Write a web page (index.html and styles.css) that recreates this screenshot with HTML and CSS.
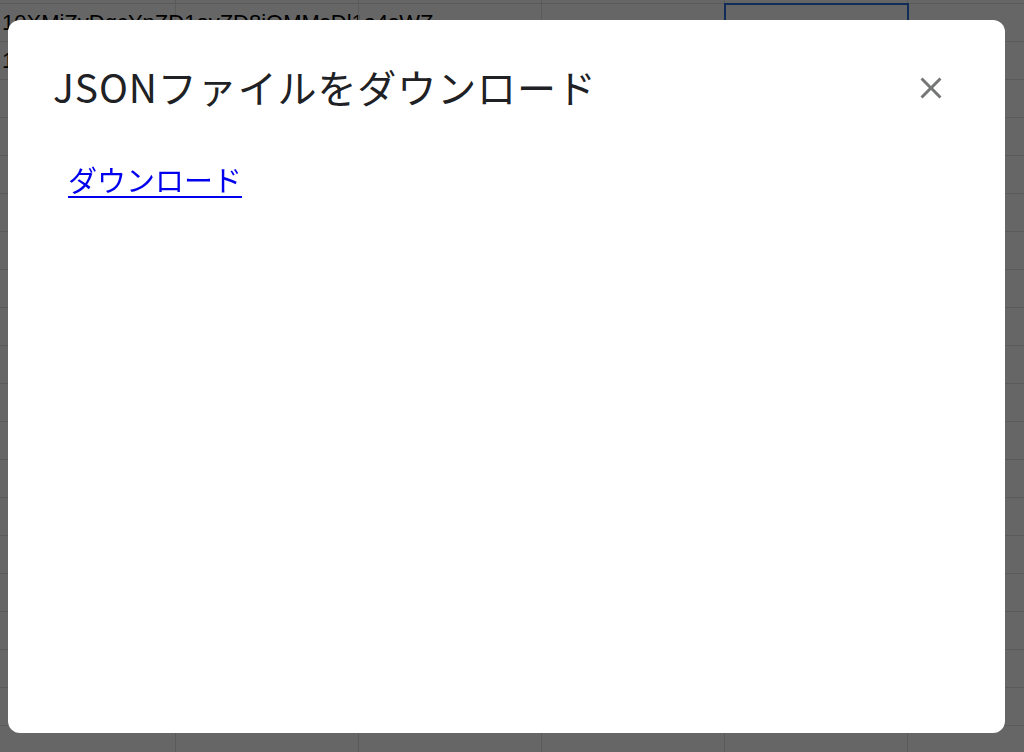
FILE: index.html
```html
<!DOCTYPE html>
<html lang="ja">
<head>
<meta charset="utf-8">
<title>JSONファイルをダウンロード</title>
<link rel="stylesheet" href="styles.css">
</head>
<body>
<div class="sheet">
  <div class="row row-top">
    <div class="cell c-first"></div><div class="cell"></div><div class="cell"></div><div class="cell"></div><div class="cell"></div><div class="cell"></div>
  </div>
  <div class="row">
    <div class="cell c-first"><span class="cell-text">10XMiZyDqcYnZD1ovZD8iOMMsDl1a4sWZ</span></div><div class="cell"></div><div class="cell"></div><div class="cell"></div><div class="cell selected"></div><div class="cell"></div>
  </div>
  <div class="row">
    <div class="cell c-first"><span class="cell-text">1fXqZ</span></div><div class="cell"></div><div class="cell"></div><div class="cell"></div><div class="cell"></div><div class="cell"></div>
  </div>
  <div class="row"><div class="cell c-first"></div><div class="cell"></div><div class="cell"></div><div class="cell"></div><div class="cell"></div><div class="cell"></div></div>
  <div class="row"><div class="cell c-first"></div><div class="cell"></div><div class="cell"></div><div class="cell"></div><div class="cell"></div><div class="cell"></div></div>
  <div class="row"><div class="cell c-first"></div><div class="cell"></div><div class="cell"></div><div class="cell"></div><div class="cell"></div><div class="cell"></div></div>
  <div class="row"><div class="cell c-first"></div><div class="cell"></div><div class="cell"></div><div class="cell"></div><div class="cell"></div><div class="cell"></div></div>
  <div class="row"><div class="cell c-first"></div><div class="cell"></div><div class="cell"></div><div class="cell"></div><div class="cell"></div><div class="cell"></div></div>
  <div class="row"><div class="cell c-first"></div><div class="cell"></div><div class="cell"></div><div class="cell"></div><div class="cell"></div><div class="cell"></div></div>
  <div class="row"><div class="cell c-first"></div><div class="cell"></div><div class="cell"></div><div class="cell"></div><div class="cell"></div><div class="cell"></div></div>
  <div class="row"><div class="cell c-first"></div><div class="cell"></div><div class="cell"></div><div class="cell"></div><div class="cell"></div><div class="cell"></div></div>
  <div class="row"><div class="cell c-first"></div><div class="cell"></div><div class="cell"></div><div class="cell"></div><div class="cell"></div><div class="cell"></div></div>
  <div class="row"><div class="cell c-first"></div><div class="cell"></div><div class="cell"></div><div class="cell"></div><div class="cell"></div><div class="cell"></div></div>
  <div class="row"><div class="cell c-first"></div><div class="cell"></div><div class="cell"></div><div class="cell"></div><div class="cell"></div><div class="cell"></div></div>
  <div class="row"><div class="cell c-first"></div><div class="cell"></div><div class="cell"></div><div class="cell"></div><div class="cell"></div><div class="cell"></div></div>
  <div class="row"><div class="cell c-first"></div><div class="cell"></div><div class="cell"></div><div class="cell"></div><div class="cell"></div><div class="cell"></div></div>
  <div class="row"><div class="cell c-first"></div><div class="cell"></div><div class="cell"></div><div class="cell"></div><div class="cell"></div><div class="cell"></div></div>
  <div class="row"><div class="cell c-first"></div><div class="cell"></div><div class="cell"></div><div class="cell"></div><div class="cell"></div><div class="cell"></div></div>
  <div class="row"><div class="cell c-first"></div><div class="cell"></div><div class="cell"></div><div class="cell"></div><div class="cell"></div><div class="cell"></div></div>
  <div class="row"><div class="cell c-first"></div><div class="cell"></div><div class="cell"></div><div class="cell"></div><div class="cell"></div><div class="cell"></div></div>
  <div class="row"><div class="cell c-first"></div><div class="cell"></div><div class="cell"></div><div class="cell"></div><div class="cell"></div><div class="cell"></div></div>
</div>

<div class="scrim"></div>

<div class="dialog" role="dialog" aria-labelledby="dlg-title">
  <div class="dialog-header">
    <h1 class="dialog-title" id="dlg-title">JSONファイルをダウンロード</h1>
    <button class="close-btn" aria-label="閉じる">
      <svg viewBox="0 0 24 24" width="36" height="36"><path d="M19 6.41L17.59 5 12 10.59 6.41 5 5 6.41 10.59 12 5 17.59 6.41 19 12 13.41 17.59 19 19 17.59 13.41 12z" fill="#747775"/></svg>
    </button>
  </div>
  <div class="dialog-body">
    <a class="download-link" href="#">ダウンロード</a>
  </div>
</div>
</body>
</html>
```

FILE: styles.css
```css
html, body {
  margin: 0;
  padding: 0;
  width: 1024px;
  height: 752px;
  overflow: hidden;
  background: #ffffff;
  font-family: "Liberation Sans", Arial, sans-serif;
}

.sheet {
  display: flex;
  flex-direction: column;
  width: 1024px;
  overflow: hidden;
}

.row {
  display: flex;
  flex: none;
  height: 38px;
}

.row-top {
  height: 4px;
}

.cell {
  flex: none;
  box-sizing: border-box;
  width: 183px;
  height: 100%;
  border-right: 1px solid #e1e1e1;
  border-bottom: 1px solid #e1e1e1;
  overflow: visible;
  white-space: nowrap;
}

.c-first {
  width: 176px;
}

.cell-text {
  display: block;
  padding-left: 2px;
  font-size: 22px;
  line-height: 37px;
  color: #000000;
}

.selected {
  outline: 2px solid #2b6fd6;
  outline-offset: -1px;
}

.scrim {
  position: fixed;
  inset: 0;
  background: rgba(0, 0, 0, 0.6);
}

.dialog {
  position: absolute;
  left: 8px;
  top: 20px;
  width: 997px;
  height: 713px;
  box-sizing: border-box;
  background: #ffffff;
  border-radius: 12px;
  display: flex;
  flex-direction: column;
}

.dialog-header {
  display: flex;
  align-items: center;
  justify-content: space-between;
  padding: 42px 56px 0 45px;
}

.dialog-title {
  margin: 0;
  font-family: "Noto Sans CJK JP", "Noto Sans", sans-serif;
  font-weight: 400;
  font-size: 39px;
  line-height: 48px;
  letter-spacing: 0.9px;
  color: #202124;
}

.close-btn {
  display: flex;
  padding: 0;
  margin: 3px 0 0 0;
  border: 0;
  background: transparent;
  width: 36px;
  height: 36px;
}

.dialog-body {
  padding: 51px 0 0 60px;
}

.download-link {
  font-family: "Noto Sans CJK JP", "Noto Sans", sans-serif;
  font-size: 29px;
  line-height: 36px;
  color: #0000ee;
  text-decoration: underline;
  text-underline-offset: 4px;
}
```
